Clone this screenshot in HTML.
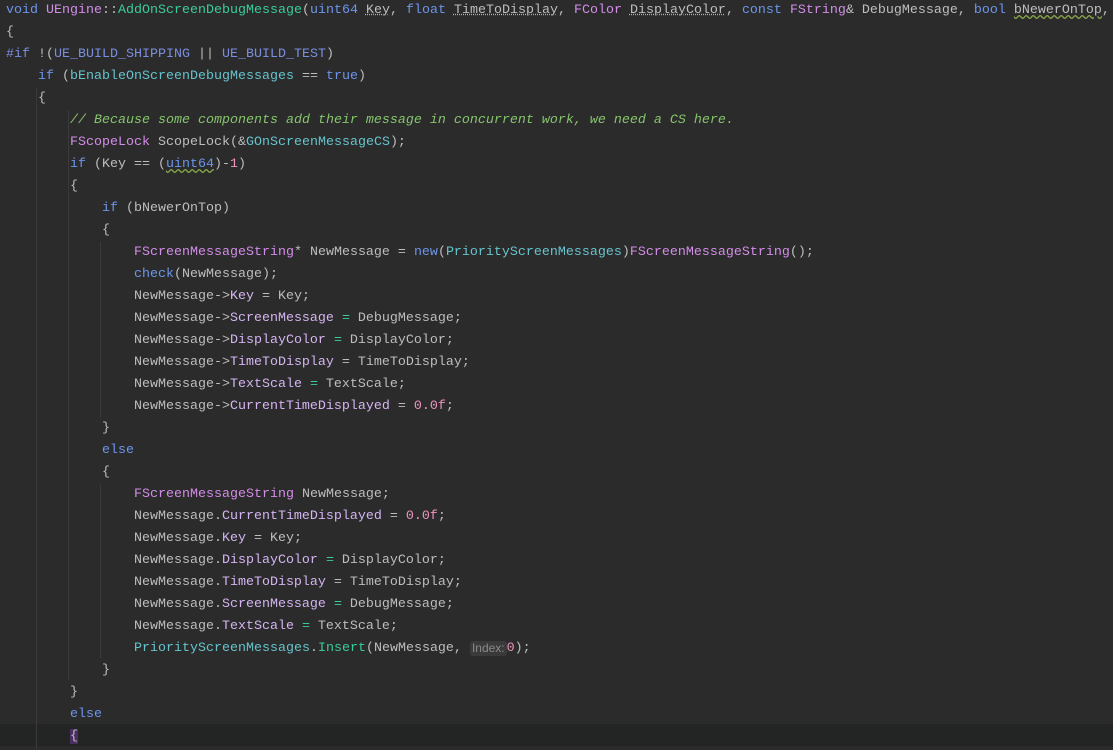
<!DOCTYPE html>
<html><head><meta charset="utf-8"><style>
html,body{margin:0;padding:0;background:#2b2b2b;width:1113px;height:750px;overflow:hidden}
pre{position:absolute;left:6px;top:0px;margin:0;font-family:"Liberation Mono",monospace;font-size:13.33px;line-height:22px;color:#bdbdbd;white-space:pre}
pre span{line-height:22px}
.k{color:#6c95eb}.f{color:#39cc9b}.c{color:#d38ce8}.m{color:#7a8ee0}.cm{color:#85c46c;font-style:italic}
.fd{color:#d4b4f2}.n{color:#ed94c0}.g{color:#66c3cc}.o{color:#39cc9b}
pre span.hint{color:#8a8a8a;background:#3a3a3a;font-family:"Liberation Sans",sans-serif;font-size:12px;line-height:14px;display:inline-block;height:15px;vertical-align:top;margin-top:3px;padding:0 2px;border-radius:3px}
.u{text-decoration:underline dotted #a6c26a}
.w{text-decoration:underline wavy #8aa84a}
.cur{position:absolute;left:0;top:724px;width:1113px;height:22px;background:#232525}
.guide{position:absolute;width:1px;background:#3a3a3a}
.br{background:#4b2f63}
</style></head><body>
<div class="cur"></div>
<div class="guide" style="left:36px;top:88px;height:662px"></div>
<div class="guide" style="left:68px;top:110px;height:570px"></div>
<div class="guide" style="left:100px;top:242px;height:176px"></div>
<div class="guide" style="left:100px;top:484px;height:174px"></div>
<pre><span class="k">void</span> <span class="c">UEngine</span>::<span class="f">AddOnScreenDebugMessage</span>(<span class="k">uint64</span> <span class="u">Key</span>, <span class="k">float</span> <span class="u">TimeToDisplay</span>, <span class="c">FColor</span> <span class="u">DisplayColor</span>, <span class="k">const</span> <span class="c">FString</span>&amp; DebugMessage, <span class="k">bool</span> <span class="w">bNewerOnTop</span>,
{
<span class="m">#if</span> !(<span class="m">UE_BUILD_SHIPPING</span> || <span class="m">UE_BUILD_TEST</span>)
    <span class="k">if</span> (<span class="g">bEnableOnScreenDebugMessages</span> == <span class="k">true</span>)
    {
        <span class="cm">// Because some components add their message in concurrent work, we need a CS here.</span>
        <span class="c">FScopeLock</span> ScopeLock(&amp;<span class="g">GOnScreenMessageCS</span>);
        <span class="k">if</span> (Key == (<span class="k w">uint64</span>)-<span class="n">1</span>)
        {
            <span class="k">if</span> (bNewerOnTop)
            {
                <span class="c">FScreenMessageString</span>* NewMessage = <span class="k">new</span>(<span class="g">PriorityScreenMessages</span>)<span class="c">FScreenMessageString</span>();
                <span class="k">check</span>(NewMessage);
                NewMessage-&gt;<span class="fd">Key</span> = Key;
                NewMessage-&gt;<span class="fd">ScreenMessage</span> <span class="o">=</span> DebugMessage;
                NewMessage-&gt;<span class="fd">DisplayColor</span> <span class="o">=</span> DisplayColor;
                NewMessage-&gt;<span class="fd">TimeToDisplay</span> = TimeToDisplay;
                NewMessage-&gt;<span class="fd">TextScale</span> <span class="o">=</span> TextScale;
                NewMessage-&gt;<span class="fd">CurrentTimeDisplayed</span> = <span class="n">0.0f</span>;
            }
            <span class="k">else</span>
            {
                <span class="c">FScreenMessageString</span> NewMessage;
                NewMessage.<span class="fd">CurrentTimeDisplayed</span> = <span class="n">0.0f</span>;
                NewMessage.<span class="fd">Key</span> = Key;
                NewMessage.<span class="fd">DisplayColor</span> <span class="o">=</span> DisplayColor;
                NewMessage.<span class="fd">TimeToDisplay</span> = TimeToDisplay;
                NewMessage.<span class="fd">ScreenMessage</span> <span class="o">=</span> DebugMessage;
                NewMessage.<span class="fd">TextScale</span> <span class="o">=</span> TextScale;
                <span class="g">PriorityScreenMessages</span>.<span class="f">Insert</span>(NewMessage, <span class="hint">Index:</span><span class="n">0</span>);
            }
        }
        <span class="k">else</span>
        <span class="br">{</span></pre>
</body></html>
